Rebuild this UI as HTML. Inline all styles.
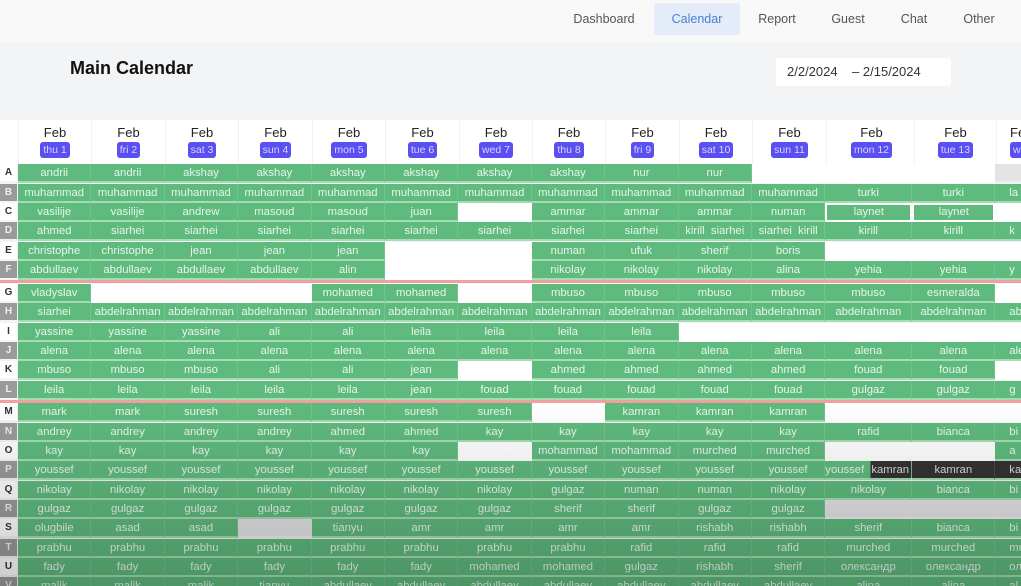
<!DOCTYPE html>
<html><head><meta charset="utf-8"><style>
*{box-sizing:border-box;margin:0;padding:0}
html,body{width:1021px;height:586px;overflow:hidden}
body{background:#f3f4f6;font-family:"Liberation Sans",sans-serif;position:relative}
.top{position:absolute;left:0;top:0;width:1021px;height:42px;background:#f8f8f8}
.nav{position:absolute;top:3px;height:32px;line-height:32px;font-size:12.5px;color:#555;text-align:center}
.title{position:absolute;left:70px;top:58px;font-size:18px;font-weight:bold;color:#111}
.date{position:absolute;left:776px;top:58px;width:175px;height:28px;background:#fff;border-radius:3px;font-size:13px;color:#333;line-height:28px;padding-left:11px}
.hdr{position:absolute;left:0;top:120px;width:1021px;height:44px;background:#fff}
.hc{position:absolute;top:0;height:44px;text-align:center;border-left:1px solid #f2f2f2}
.hc b{display:block;font-size:13px;font-weight:normal;color:#222;margin-top:5px}
.hc i{display:inline-block;font-style:normal;background:#5a4ff0;color:#d8d6ff;font-size:10.5px;padding:1px 3px;border-radius:3px;margin-top:2px;line-height:14px}
.r{position:absolute;left:18px;height:19.4px;display:flex;width:1010px}
.r>div{width:73.4px;height:19.4px;background:#5fba7d;border-bottom:2px solid #a5dbb5;border-right:1px solid rgba(255,255,255,.12);color:rgba(255,255,255,.85);font-size:11.3px;text-align:center;line-height:18px;white-space:nowrap;overflow:hidden;flex:none}
.r>div:nth-child(12){width:87px}.r>div:nth-child(13){width:83px}.r>div:nth-child(14){width:70px;text-align:left;padding-left:14px}
.r>div.w{background:#fff;border-bottom-color:#fff;border-right-color:#fff}
.r>div.g{background:#e4e4e6;border-bottom-color:#eee}
.r>div.l{border:2px solid #fff;line-height:14px}
.r>div.d{background:#333;color:#ddd}
.lab{position:absolute;left:0;width:17px;height:17px;font-size:10px;font-weight:bold;text-align:center;line-height:17px;color:#333;background:#fff}
.lab.k{background:#9a9a9a;color:#eee}
.red{position:absolute;left:0;width:1021px;height:3px;background:#f0a0a0}
.shade{position:absolute;left:0;top:400px;width:1021px;height:186px;background:linear-gradient(rgba(0,0,0,0),rgba(0,0,0,.2));pointer-events:none}
</style></head><body>
<div class="top"></div>
<div class="nav" style="left:566px;width:76px">Dashboard</div>
<div class="nav" style="left:654px;width:86px;background:#e3ecf8;color:#4a7fd0;border-radius:3px">Calendar</div>
<div class="nav" style="left:750px;width:54px">Report</div>
<div class="nav" style="left:822px;width:52px">Guest</div>
<div class="nav" style="left:892px;width:44px">Chat</div>
<div class="nav" style="left:956px;width:46px">Other</div>
<div class="title">Main Calendar</div>
<div class="date">2/2/2024 &nbsp;&nbsp;&nbsp;– 2/15/2024</div>

<div class="hdr">
<div class="hc" style="left:18px;width:73px"><b>Feb</b><i>thu 1</i></div>
<div class="hc" style="left:91px;width:74px"><b>Feb</b><i>fri 2</i></div>
<div class="hc" style="left:165px;width:73px"><b>Feb</b><i>sat 3</i></div>
<div class="hc" style="left:238px;width:74px"><b>Feb</b><i>sun 4</i></div>
<div class="hc" style="left:312px;width:73px"><b>Feb</b><i>mon 5</i></div>
<div class="hc" style="left:385px;width:74px"><b>Feb</b><i>tue 6</i></div>
<div class="hc" style="left:459px;width:73px"><b>Feb</b><i>wed 7</i></div>
<div class="hc" style="left:532px;width:73px"><b>Feb</b><i>thu 8</i></div>
<div class="hc" style="left:605px;width:74px"><b>Feb</b><i>fri 9</i></div>
<div class="hc" style="left:679px;width:73px"><b>Feb</b><i>sat 10</i></div>
<div class="hc" style="left:752px;width:74px"><b>Feb</b><i>sun 11</i></div>
<div class="hc" style="left:826px;width:90px"><b>Feb</b><i>mon 12</i></div>
<div class="hc" style="left:914px;width:82px"><b>Feb</b><i>tue 13</i></div>
<div class="hc" style="left:996px;width:80px;text-align:left;padding-left:13px"><b>Feb</b><i>wed 14</i></div>
</div>

<div class="lab" style="top:164px">A</div><div class="lab k" style="top:183.5px">B</div><div class="lab" style="top:203px">C</div><div class="lab k" style="top:222px">D</div><div class="lab" style="top:241.5px">E</div><div class="lab k" style="top:261px">F</div>
<div class="lab" style="top:284px">G</div><div class="lab k" style="top:303px">H</div><div class="lab" style="top:322.5px">I</div><div class="lab k" style="top:342px">J</div><div class="lab" style="top:361px">K</div><div class="lab k" style="top:380.5px">L</div>
<div class="lab" style="top:403px">M</div><div class="lab k" style="top:422.5px">N</div><div class="lab" style="top:442px">O</div><div class="lab k" style="top:461px">P</div><div class="lab" style="top:480.5px">Q</div><div class="lab k" style="top:500px">R</div><div class="lab" style="top:519px">S</div><div class="lab k" style="top:538.5px">T</div><div class="lab" style="top:558px">U</div><div class="lab k" style="top:577px">V</div>

<div class="r" style="top:164px"><div>andrii</div><div>andrii</div><div>akshay</div><div>akshay</div><div>akshay</div><div>akshay</div><div>akshay</div><div>akshay</div><div>nur</div><div>nur</div><div class="w"></div><div class="w"></div><div class="w"></div><div class="g"></div></div>
<div class="r" style="top:183.5px"><div>muhammad</div><div>muhammad</div><div>muhammad</div><div>muhammad</div><div>muhammad</div><div>muhammad</div><div>muhammad</div><div>muhammad</div><div>muhammad</div><div>muhammad</div><div>muhammad</div><div>turki</div><div>turki</div><div>la</div></div>
<div class="r" style="top:203px"><div>vasilije</div><div>vasilije</div><div>andrew</div><div>masoud</div><div>masoud</div><div>juan</div><div class="w"></div><div>ammar</div><div>ammar</div><div>ammar</div><div>numan</div><div class="l">laynet</div><div class="l">laynet</div><div class="w"></div></div>
<div class="r" style="top:222px"><div>ahmed</div><div>siarhei</div><div>siarhei</div><div>siarhei</div><div>siarhei</div><div>siarhei</div><div>siarhei</div><div>siarhei</div><div>siarhei</div><div>kirill &nbsp;siarhei</div><div>siarhei &nbsp;kirill</div><div>kirill</div><div>kirill</div><div>k</div></div>
<div class="r" style="top:241.5px"><div>christophe</div><div>christophe</div><div>jean</div><div>jean</div><div>jean</div><div class="w"></div><div class="w"></div><div>numan</div><div>ufuk</div><div>sherif</div><div>boris</div><div class="w"></div><div class="w"></div><div class="w"></div></div>
<div class="r" style="top:261px"><div>abdullaev</div><div>abdullaev</div><div>abdullaev</div><div>abdullaev</div><div>alin</div><div class="w"></div><div class="w"></div><div>nikolay</div><div>nikolay</div><div>nikolay</div><div>alina</div><div>yehia</div><div>yehia</div><div>y</div></div>
<div class="red" style="top:280px"></div>
<div class="r" style="top:284px"><div>vladyslav</div><div class="w"></div><div class="w"></div><div class="w"></div><div>mohamed</div><div>mohamed</div><div class="w"></div><div>mbuso</div><div>mbuso</div><div>mbuso</div><div>mbuso</div><div>mbuso</div><div>esmeralda</div><div class="w"></div></div>
<div class="r" style="top:303px"><div>siarhei</div><div>abdelrahman</div><div>abdelrahman</div><div>abdelrahman</div><div>abdelrahman</div><div>abdelrahman</div><div>abdelrahman</div><div>abdelrahman</div><div>abdelrahman</div><div>abdelrahman</div><div>abdelrahman</div><div>abdelrahman</div><div>abdelrahman</div><div>abdel</div></div>
<div class="r" style="top:322.5px"><div>yassine</div><div>yassine</div><div>yassine</div><div>ali</div><div>ali</div><div>leila</div><div>leila</div><div>leila</div><div>leila</div><div class="w"></div><div class="w"></div><div class="w"></div><div class="w"></div><div class="w"></div></div>
<div class="r" style="top:342px"><div>alena</div><div>alena</div><div>alena</div><div>alena</div><div>alena</div><div>alena</div><div>alena</div><div>alena</div><div>alena</div><div>alena</div><div>alena</div><div>alena</div><div>alena</div><div>alena</div></div>
<div class="r" style="top:361px"><div>mbuso</div><div>mbuso</div><div>mbuso</div><div>ali</div><div>ali</div><div>jean</div><div class="w"></div><div>ahmed</div><div>ahmed</div><div>ahmed</div><div>ahmed</div><div>fouad</div><div>fouad</div><div class="w"></div></div>
<div class="r" style="top:380.5px"><div>leila</div><div>leila</div><div>leila</div><div>leila</div><div>leila</div><div>jean</div><div>fouad</div><div>fouad</div><div>fouad</div><div>fouad</div><div>fouad</div><div>gulgaz</div><div>gulgaz</div><div>g</div></div>
<div class="red" style="top:399.5px"></div>
<div class="r" style="top:403px"><div>mark</div><div>mark</div><div>suresh</div><div>suresh</div><div>suresh</div><div>suresh</div><div>suresh</div><div class="w"></div><div>kamran</div><div>kamran</div><div>kamran</div><div class="w"></div><div class="w"></div><div class="w"></div></div>
<div class="r" style="top:422.5px"><div>andrey</div><div>andrey</div><div>andrey</div><div>andrey</div><div>ahmed</div><div>ahmed</div><div>kay</div><div>kay</div><div>kay</div><div>kay</div><div>kay</div><div>rafid</div><div>bianca</div><div>bi</div></div>
<div class="r" style="top:442px"><div>kay</div><div>kay</div><div>kay</div><div>kay</div><div>kay</div><div>kay</div><div class="w"></div><div>mohammad</div><div>mohammad</div><div>murched</div><div>murched</div><div class="w"></div><div class="w"></div><div>a</div></div>
<div class="r" style="top:461px"><div>youssef</div><div>youssef</div><div>youssef</div><div>youssef</div><div>youssef</div><div>youssef</div><div>youssef</div><div>youssef</div><div>youssef</div><div>youssef</div><div>youssef</div><div style="background:linear-gradient(90deg,#5fba7d 53%,#333 53%);text-align:left">youssef <span style="color:#ddd;padding-left:4px">kamran</span></div><div class="d">kamran</div><div class="d">ka</div></div>
<div class="r" style="top:480.5px"><div>nikolay</div><div>nikolay</div><div>nikolay</div><div>nikolay</div><div>nikolay</div><div>nikolay</div><div>nikolay</div><div>gulgaz</div><div>numan</div><div>numan</div><div>nikolay</div><div>nikolay</div><div>bianca</div><div>bi</div></div>
<div class="r" style="top:500px"><div>gulgaz</div><div>gulgaz</div><div>gulgaz</div><div>gulgaz</div><div>gulgaz</div><div>gulgaz</div><div>gulgaz</div><div>sherif</div><div>sherif</div><div>gulgaz</div><div>gulgaz</div><div class="g"></div><div class="g"></div><div class="g"></div></div>
<div class="r" style="top:519px"><div>olugbile</div><div>asad</div><div>asad</div><div class="g"></div><div>tianyu</div><div>amr</div><div>amr</div><div>amr</div><div>amr</div><div>rishabh</div><div>rishabh</div><div>sherif</div><div>bianca</div><div>bi</div></div>
<div class="r" style="top:538.5px"><div>prabhu</div><div>prabhu</div><div>prabhu</div><div>prabhu</div><div>prabhu</div><div>prabhu</div><div>prabhu</div><div>prabhu</div><div>rafid</div><div>rafid</div><div>rafid</div><div>murched</div><div>murched</div><div>mu</div></div>
<div class="r" style="top:558px"><div>fady</div><div>fady</div><div>fady</div><div>fady</div><div>fady</div><div>fady</div><div>mohamed</div><div>mohamed</div><div>gulgaz</div><div>rishabh</div><div>sherif</div><div>олександр</div><div>олександр</div><div>оле</div></div>
<div class="r" style="top:577px"><div>malik</div><div>malik</div><div>malik</div><div>tianyu</div><div>abdullaev</div><div>abdullaev</div><div>abdullaev</div><div>abdullaev</div><div>abdullaev</div><div>abdullaev</div><div>abdullaev</div><div>alina</div><div>alina</div><div>al</div></div>
<div class="shade"></div>
</body></html>
